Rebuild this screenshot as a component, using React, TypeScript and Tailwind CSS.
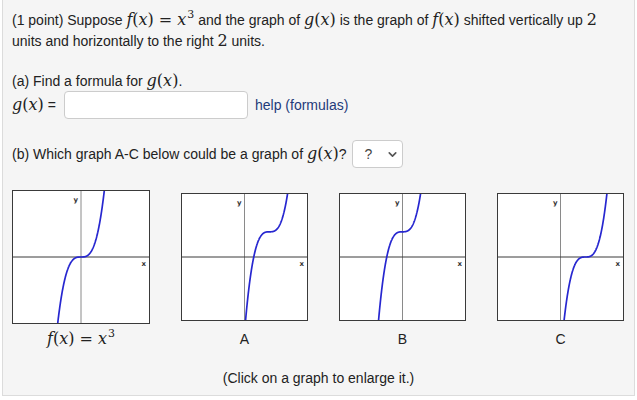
import { ChevronDown } from 'lucide-react';

type Fn = (x: number) => number;

/** Кривая в координатах [-5,5]x[-5,5], масштабированная в w x h. */
function curvePath(f: Fn, w: number, h: number): string {
  const pts: string[] = [];
  for (let i = 0; i <= 1000; i++) {
    const x = -5 + (10 * i) / 1000;
    const y = f(x);
    if (y < -6 || y > 6) continue;
    const px = ((x + 5) / 10) * w;
    const py = ((5 - y) / 10) * h;
    pts.push(`${px.toFixed(2)},${py.toFixed(2)}`);
  }
  return 'M' + pts.join(' L');
}

function Graph({ f, w, h }: { f: Fn; w: number; h: number }) {
  const cx = w / 2;
  const cy = h / 2;
  return (
    <div className="border border-[#3a3a3a] bg-white" style={{ width: w + 2, height: h + 2 }}>
      <svg width={w} height={h} className="block overflow-hidden">
        <line x1={cx} y1={0} x2={cx} y2={h} stroke="#8a8a8a" strokeWidth={1} />
        <line x1={0} y1={cy} x2={w} y2={cy} stroke="#3a3a3a" strokeWidth={1} />
        <text x={cx - 3} y={11} textAnchor="end" fontSize={7} fontWeight={700} fill="#333" fontFamily="DejaVu Sans, sans-serif">
          y
        </text>
        <text x={w - 3} y={cy + 9} textAnchor="end" fontSize={7} fontWeight={700} fill="#333" fontFamily="DejaVu Sans, sans-serif">
          x
        </text>
        <path d={curvePath(f, w, h)} fill="none" stroke="#2727d0" strokeWidth={1.7} strokeLinejoin="round" />
      </svg>
    </div>
  );
}

const mathCls = "font-['DejaVu_Serif',serif] text-[16px] leading-none";

function Gx() {
  return (
    <span className={mathCls}>
      <i>g</i>(<i>x</i>)
    </span>
  );
}

function Fx() {
  return (
    <span className={mathCls}>
      <i>f</i>(<i>x</i>)
    </span>
  );
}

function Num({ n }: { n: string }) {
  return <span className={mathCls}>{n}</span>;
}

function Cube() {
  return (
    <span className={mathCls}>
      <i>f</i>(<i>x</i>)<span className="mx-[5px]">=</span>
      <i>x</i>
      <span className="relative -top-[7px] ml-[1px] text-[11px]">3</span>
    </span>
  );
}

export default function App() {
  return (
    <div className="min-h-[400px] bg-white font-['Liberation_Sans',Arial,sans-serif] text-[14px] text-[#222]">
      <div className="ml-[2px] w-[633px] border border-t-0 border-[#dcdcdc] bg-[#f5f5f5] pb-[7px] pl-[9px] pt-[10px]">
        <p className="pr-[14px] leading-[21px]">
          (1 point) Suppose <Cube /> and the graph of <Gx /> is the graph of <Fx /> shifted vertically up{' '}
          <Num n="2" /> units and horizontally to the right <Num n="2" /> units.
        </p>

        <p className="mt-[19px] leading-[20px]">
          (a) Find a formula for <Gx />.
        </p>
        <div className="flex h-[28px] items-center">
          <span className="w-[52px]">
            <Gx /> =
          </span>
          <div className="h-[28px] w-[184px] rounded-[4px] border border-[#cccccc] bg-white" />
          <span className="ml-[7px] text-[#1f3b7a]">help (formulas)</span>
        </div>

        <div className="mt-[21px] flex h-[28px] items-center">
          <span>
            (b) Which graph A-C below could be a graph of <Gx />?
          </span>
          <div className="ml-[5px] flex h-[28px] w-[51px] items-center rounded-[4px] border border-[#cccccc] bg-white pl-[12px]">
            <span className="text-[#444]">?</span>
            <ChevronDown size={13} strokeWidth={3} className="ml-[14px] text-[#555]" />
          </div>
        </div>

        <div className="mt-[22px] grid grid-cols-[138px_127px_127px_127px] items-center gap-x-[31px]">
          <Graph f={(x) => x ** 3} w={136} h={132} />
          <Graph f={(x) => (x - 2) ** 3 + 2} w={125} h={126} />
          <Graph f={(x) => x ** 3 + 2} w={125} h={126} />
          <Graph f={(x) => (x - 2) ** 3} w={125} h={126} />
          <div className="mt-[5px] text-center leading-[20px]">
            <Cube />
          </div>
          <div className="mt-[5px] text-center leading-[20px]">A</div>
          <div className="mt-[5px] text-center leading-[20px]">B</div>
          <div className="mt-[5px] text-center leading-[20px]">C</div>
        </div>

        <p className="mt-[19px] pr-[9px] text-center leading-[20px]">(Click on a graph to enlarge it.)</p>
      </div>
    </div>
  );
}
